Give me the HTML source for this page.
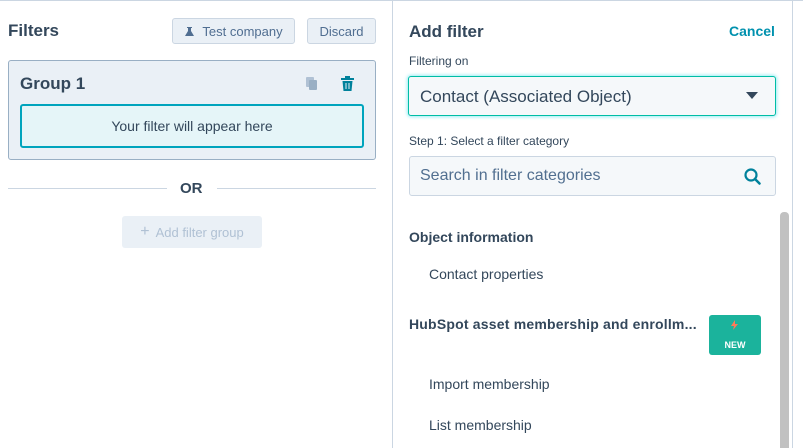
<!DOCTYPE html>
<html style="overflow:hidden;height:448px"><head><meta charset="utf-8"><style>
*{box-sizing:border-box;margin:0;padding:0}
body{width:803px;height:448px;overflow:hidden;background:#fff;font-family:"Liberation Sans",sans-serif;color:#33475b;position:relative}
.a{position:absolute}
.btn{position:absolute;background:#eaf0f6;border:1px solid #cbd6e2;border-radius:3px;font-size:13px;color:#506e91;display:flex;align-items:center;justify-content:center}
</style></head><body>
<div class="a" style="left:0;top:0;width:803px;height:1px;background:#cbd6e2"></div>
<div class="a" style="left:392px;top:0;width:1px;height:448px;background:#cbd6e2"></div>
<div class="a" style="left:792px;top:0;width:1px;height:448px;background:#cbd6e2"></div>

<div class="a" style="left:8px;top:21px;font-size:17px;font-weight:bold">Filters</div>
<div class="btn" style="left:172px;top:18px;width:123px;height:26px"><svg width="11" height="11" viewBox="0 0 11 11" style="margin-right:7px"><path d="M3 1h5v1H7v3l3 5H1l3-5V2H3z" fill="#506e91"/></svg>Test company</div>
<div class="btn" style="left:307px;top:18px;width:69px;height:26px">Discard</div>

<div class="a" style="left:8px;top:60px;width:368px;height:100px;background:#eaf0f6;border:1px solid #99afc4;border-radius:3px"></div>
<div class="a" style="left:20px;top:74px;font-size:17px;font-weight:bold">Group 1</div>
<svg class="a" style="left:306px;top:77px" width="12" height="14" viewBox="0 0 12 14"><rect x="0" y="0" width="8" height="10" rx="1" fill="#b0c1d4"/><rect x="3" y="3" width="8" height="10" rx="1" fill="#99afc4"/></svg>
<svg class="a" style="left:341px;top:76px" width="13" height="15" viewBox="0 0 13 15"><rect x="0" y="2" width="13" height="2" fill="#00819b"/><rect x="4" y="0" width="5" height="2" fill="#00819b"/><path d="M1.5 5h10l-1 10h-8z" fill="#00819b"/><rect x="4.5" y="7" width="1" height="6" fill="#eaf0f6"/><rect x="7.5" y="7" width="1" height="6" fill="#eaf0f6"/></svg>
<div class="a" style="left:20px;top:104px;width:344px;height:44px;background:#e5f5f8;border:2px solid #00a4bd;border-radius:3px;display:flex;align-items:center;justify-content:center;font-size:14px">Your filter will appear here</div>

<div class="a" style="left:8px;top:188px;width:159px;height:1px;background:#cbd6e2"></div>
<div class="a" style="left:217px;top:188px;width:159px;height:1px;background:#cbd6e2"></div>
<div class="a" style="left:180px;top:180px;font-size:15px;font-weight:bold">OR</div>
<div class="a" style="left:122px;top:216px;width:140px;height:32px;background:#eaf0f6;border-radius:3px;display:flex;align-items:center;justify-content:center;font-size:13px;color:#b0c1d4"><span style="font-size:16px;margin-right:6px">+</span>Add filter group</div>

<div class="a" style="left:409px;top:22px;font-size:17px;font-weight:bold">Add filter</div>
<div class="a" style="left:729px;top:23px;font-size:14px;font-weight:bold;color:#0091ae">Cancel</div>
<div class="a" style="left:409px;top:54px;font-size:12px">Filtering on</div>
<div class="a" style="left:408px;top:76px;width:368px;height:40px;background:#f5f8fa;border:1px solid #00bda5;box-shadow:0 0 3px 1px rgba(0,208,228,.4);border-radius:3px"></div>
<div class="a" style="left:420px;top:87px;font-size:17px">Contact (Associated Object)</div>
<svg class="a" style="left:746px;top:92px" width="12" height="7"><path d="M0 0h12L6 7z" fill="#33475b"/></svg>
<div class="a" style="left:409px;top:134px;font-size:12px">Step 1: Select a filter category</div>
<div class="a" style="left:409px;top:156px;width:367px;height:40px;background:#f5f8fa;border:1px solid #cbd6e2;border-radius:3px"></div>
<div class="a" style="left:420px;top:167px;font-size:16px;color:#516f90">Search in filter categories</div>
<svg class="a" style="left:744px;top:168px" width="17" height="17" viewBox="0 0 17 17"><circle cx="7" cy="7" r="5.5" fill="none" stroke="#00819b" stroke-width="2.2"/><path d="M11 11l4.5 4.5" stroke="#00819b" stroke-width="2.5" stroke-linecap="round"/></svg>

<div class="a" style="left:780px;top:212px;width:9px;height:236px;background:#c1c1c1;border-radius:4px 4px 0 0"></div>
<div class="a" style="left:409px;top:229px;font-size:14px;font-weight:bold">Object information</div>
<div class="a" style="left:429px;top:266px;font-size:14px">Contact properties</div>
<div class="a" style="left:409px;top:316px;font-size:14px;font-weight:bold;letter-spacing:0.2px">HubSpot asset membership and enrollm...</div>
<div class="a" style="left:709px;top:315px;width:52px;height:40px;background:#1bb39c;border-radius:3px"></div>
<svg class="a" style="left:731px;top:320px" width="7" height="10" viewBox="0 0 7 10"><path d="M4 0L0 6h3l-1 4 5-6H4z" fill="#ff7a59"/></svg>
<div class="a" style="left:709px;top:340px;width:52px;text-align:center;font-size:9px;font-weight:bold;color:#fff">NEW</div>
<div class="a" style="left:429px;top:376px;font-size:14px">Import membership</div>
<div class="a" style="left:429px;top:417px;font-size:14px">List membership</div>
</body></html>
